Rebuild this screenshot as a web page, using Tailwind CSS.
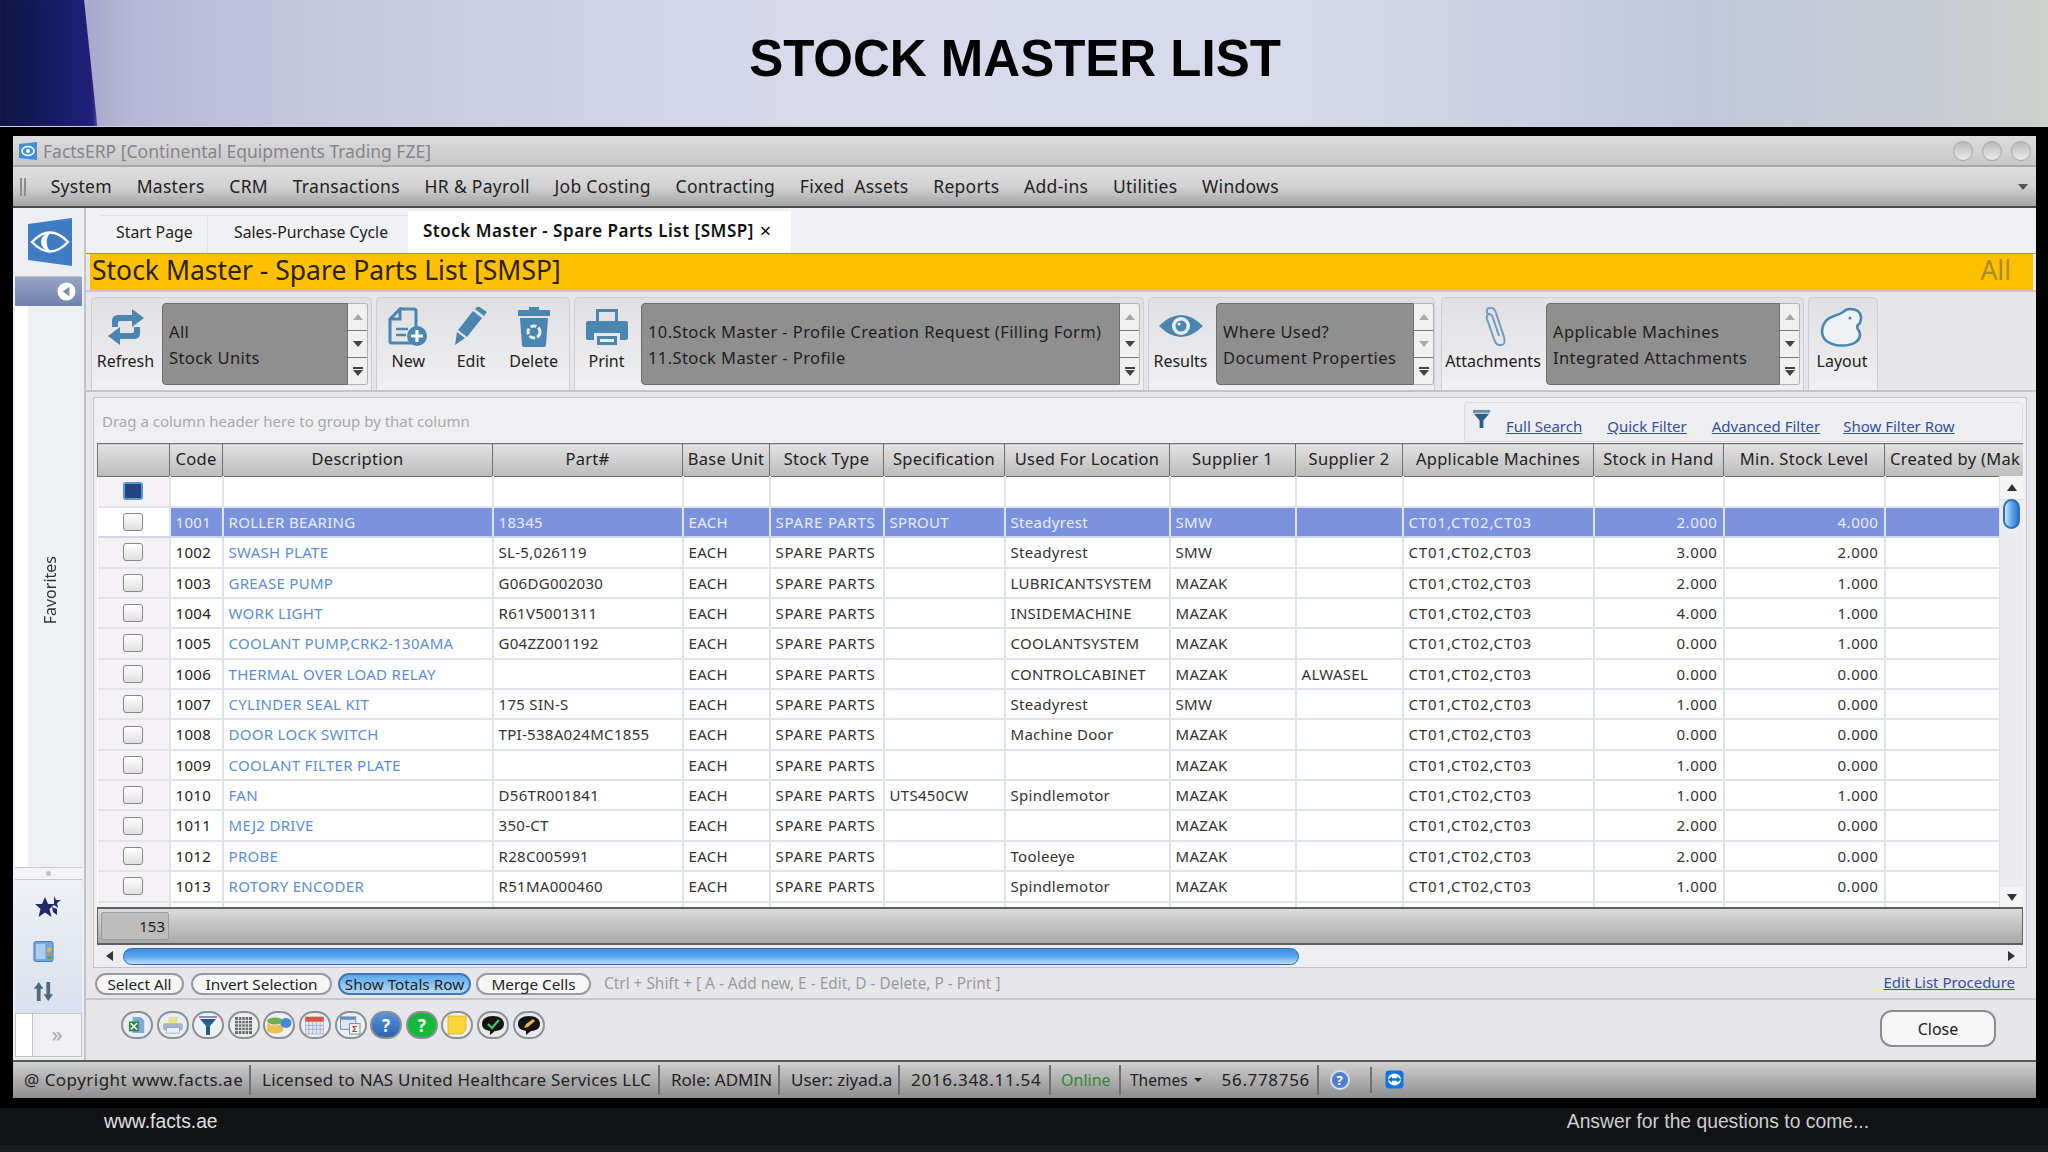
<!DOCTYPE html>
<html lang="en">
<head>
  <meta charset="UTF-8">
  <title>Stock Master List</title>
  <script src="https://cdn.jsdelivr.net/npm/@tailwindcss/browser@4"></script>
</head>
<body class="w-[2048px] h-[1152px] overflow-hidden bg-black flex flex-col font-['Noto_Sans',sans-serif] text-[#222]">

  <!-- Banner -->
  <header class="relative h-[127px] shrink-0 overflow-hidden flex items-center justify-center pb-[10px] bg-[linear-gradient(90deg,#a9a9cc_90px,#b8b9d6_140px,#c4c6e0_300px,#d8daec_800px,#d6daea_1300px,#c0c8da_1700px,#c6cbd4_1900px,#cdd0cc_2048px)] border-b border-[#d0d0d8]">
    <div class="absolute left-[-6px] top-[-6px] bottom-[-6px] w-[104px] blur-[3px] bg-gradient-to-r from-[#0c1440] to-[#20207e] [clip-path:polygon(0_0,86%_0,100%_100%,0_100%)]"></div>
    <h1 class="relative ml-[-18px] font-['Liberation_Sans',sans-serif] font-bold text-[51px] leading-none text-black">STOCK MASTER LIST</h1>
  </header>

  <!-- App window -->
  <div class="pt-[9px] pl-[13px] pr-[12px] h-[971px] shrink-0">
    <div class="h-[962px] flex flex-col bg-[#e7e7e9]">

      <!-- Title bar -->
      <div class="h-[31px] shrink-0 flex items-center pl-[5px] pr-[5px] bg-gradient-to-b from-[#dcdcdc] to-[#c8c8c8] border-b-2 border-[#a8a8a8]">
        <svg viewBox="0 0 20 20" class="w-[20px] h-[20px]"><path d="M1 3 L19 1 V19 L1 17 Z" fill="#3f8fd8"/><ellipse cx="10" cy="10" rx="6" ry="4.5" fill="none" stroke="#fff" stroke-width="1.6"/><circle cx="10" cy="10" r="2" fill="#fff"/></svg>
        <span class="ml-[5px] pt-[2px] text-[17.5px] text-[#85858a]">FactsERP [Continental Equipments Trading FZE]</span>
        <div class="ml-auto flex gap-[9px]">
          <span class="w-[20px] h-[20px] rounded-full border border-[#a8a8a8] bg-gradient-to-b from-[#b8b8b8] to-[#ececec]"></span>
          <span class="w-[20px] h-[20px] rounded-full border border-[#a8a8a8] bg-gradient-to-b from-[#b8b8b8] to-[#ececec]"></span>
          <span class="w-[20px] h-[20px] rounded-full border border-[#a8a8a8] bg-gradient-to-b from-[#b8b8b8] to-[#ececec]"></span>
        </div>
      </div>

      <!-- Menu bar -->
      <nav class="h-[41px] shrink-0 flex items-center gap-[24.7px] pl-[7px] pr-[8px] text-[17.5px] tracking-[0.3px] text-[#222] bg-gradient-to-b from-[#dedede] via-[#d2d2d2] to-[#a4a4a4] border-b-2 border-[#4c4c4c]">
        <span class="w-[6px] h-[18px] border-x-2 border-[#8c8c8c]"></span>
        <span>System</span><span>Masters</span><span>CRM</span><span>Transactions</span><span>HR &amp; Payroll</span><span>Job Costing</span><span>Contracting</span><span>Fixed&nbsp; Assets</span><span>Reports</span><span>Add-ins</span><span>Utilities</span><span>Windows</span>
        <span class="ml-auto w-0 h-0 border-x-[5px] border-x-transparent border-t-[6px] border-t-[#555]"></span>
      </nav>

      <div class="h-[852px] shrink-0 flex">

        <!-- Side rail -->
        <aside class="w-[73px] shrink-0 flex flex-col border-r-2 border-[#c4c4c4] bg-[#eceef2] px-[2px]">
          <div class="h-[69px] shrink-0 flex items-center justify-center pl-[2px] border-b border-[#c8c8c8]">
            <svg viewBox="0 0 44 48" class="w-[44px] h-[48px]"><path d="M0 6 L44 0 V48 L0 42 Z" fill="#3f7cc4"/><path d="M4 24 Q22 5 40 24 Q22 43 4 24Z" fill="none" stroke="#fff" stroke-width="2.4"/><path d="M22 15 A9 9 0 0 0 22 33 A14 14 0 0 1 22 15Z" fill="#fff"/></svg>
          </div>
          <div class="h-[29px] shrink-0 flex items-center justify-end pr-[6px] bg-gradient-to-b from-[#97a5c6] to-[#6f83ad]">
            <svg viewBox="0 0 20 20" class="w-[19px] h-[19px]"><circle cx="10" cy="10" r="9.5" fill="#fff"/><path d="M13 5 L6 10 L13 15 Z" fill="#7b8dae"/></svg>
          </div>
          <div class="flex-1 flex items-center justify-center pl-[3px] pt-[8px] bg-gradient-to-r from-white from-20% to-[#eff0f3] to-20%">
            <span class="[writing-mode:vertical-rl] rotate-180 text-[16px] text-[#333]">Favorites</span>
          </div>
          <div class="h-[13px] shrink-0 flex items-center justify-center bg-[#f4f4f6] border-y border-[#c8c8c8]"><span class="w-[5px] h-[5px] rounded-full bg-[#c4c4c4]"></span></div>
          <div class="h-[133px] shrink-0 flex flex-col items-center pt-[15px] bg-gradient-to-b from-[#eef0f4] to-[#d9e1ee]">
            <svg viewBox="0 0 28 24" class="w-[28px] h-[24px]"><path d="M10 2 L13 9 L20 9 L14.5 14 L16.5 22 L10 17.5 L3.5 22 L5.5 14 L0 9 L7 9Z" fill="#1f2a6c"/><path d="M19 1 L21 5 L26 5 L22 8 L23 13 L19 10 Z M17 12 L22 14 L22 20 L18 17Z" fill="#1f2a6c"/></svg>
            <svg viewBox="0 0 22 22" class="w-[21px] h-[21px] mt-[22px] mr-[10px]"><rect x="1" y="0.5" width="20" height="21" rx="2" fill="#6fa4dc" stroke="#4a78b0"/><rect x="3" y="3" width="10" height="16" fill="#a8cdf0"/><rect x="15" y="7" width="4" height="4" fill="#e0c030"/><rect x="15" y="12" width="4" height="3" fill="#d89030"/><rect x="15" y="16" width="4" height="3" fill="#60a040"/></svg>
            <svg viewBox="0 0 22 22" class="w-[21px] h-[21px] mt-[19px] mr-[10px]"><path d="M6 1 L11 8 H8 V21 H4 V8 H1 Z M16 21 L11 14 H14 V1 H18 V14 H21 Z" fill="#4b6b82"/></svg>
          </div>
          <div class="h-[44px] shrink-0 flex bg-[#f0f0f2] border border-[#c4c4c4] mb-[3px]">
            <span class="w-[17px] border-r border-[#c4c4c4] bg-white"></span>
            <span class="flex-1 flex items-center justify-center text-[22px] leading-none text-[#a4a8b0] pb-[4px]">»</span>
          </div>
        </aside>

        <!-- Main -->
        <main class="flex-1 min-w-0 flex flex-col">

          <!-- Tabs -->
          <div class="h-[45px] shrink-0 flex items-end pl-[14px] bg-[#f0f0f3] text-[15.8px]">
            <div class="w-[108px] h-[38px] flex items-center pl-[16px] pb-[4px] border-r border-[#e2e2e6] border-t border-t-[#e2e2e6]">Start Page</div>
            <div class="w-[200px] h-[38px] flex items-center pl-[26px] pb-[4px] border-t border-t-[#e2e2e6]">Sales-Purchase Cycle</div>
            <div class="w-[383px] h-[42px] flex items-center pl-[15px] pb-[2px] bg-white font-semibold text-[17px] tracking-[0.52px] text-[#111] whitespace-nowrap">Stock Master - Spare Parts List [SMSP]<span class="ml-[6px] text-[20px] leading-none font-normal">×</span></div>
          </div>
          <div class="h-[1px] shrink-0 bg-[#8e8e8e]"></div>

          <!-- Heading band -->
          <div class="h-[36px] shrink-0 ml-[4px] mr-[3px] flex items-center justify-between pl-[2px] pr-[22px] pb-[4px] bg-[#ffc000] text-[26.5px] leading-none text-[#2a2200]">
            <span>Stock Master - Spare Parts List [SMSP]</span>
            <span class="text-[#a78d2c]">All</span>
          </div>
          <div class="h-[2px] shrink-0 bg-[#c8c8c8]"></div>

          <!-- Toolbar -->
          <div class="h-[100px] shrink-0 flex pl-[5px] pt-[5px] pr-[2px] bg-[#e7e7e9] border-b-2 border-[#c4c4c6] text-[16px]">

            <div class="w-[281px] flex rounded-t-[5px] border border-b-0 border-[#cfcfd2] bg-gradient-to-b from-[#e0e0e2] to-[#f0f0f2]">
              <div class="w-[70px] flex flex-col items-center pt-[9px] pr-[3px]">
                <svg viewBox="0 0 40 40" class="w-[40px] h-[40px]"><path d="M6 20 V14 Q6 8 12 8 H26 V2 L38 11 L26 20 V14 H14 Q12 14 12 16 V20 Z M34 20 V26 Q34 32 28 32 H14 V38 L2 29 L14 20 V26 H26 Q28 26 28 24 V20 Z" fill="#4a86b0"/></svg>
                <span class="mt-[2px]">Refresh</span>
              </div>
              <div class="w-[186px] h-[82px] mt-[5px] pt-[1px] flex flex-col justify-center leading-[26px] pl-[6px] bg-[#8f8f8f] border border-[#6e6e6e] rounded-l-[4px] text-[16.5px] tracking-[0.41px] text-[#1e1e1e]"><span>All</span><span>Stock Units</span></div>
              <div class="w-[20px] h-[82px] mt-[5px] flex flex-col border border-l-0 border-[#b4b4b4] rounded-r-[3px] bg-[#f0f0f0]">
                <span class="flex-1 flex items-center justify-center border-b border-[#777]"><span class="w-0 h-0 border-x-[5px] border-x-transparent border-b-[6px] border-b-[#aaa]"></span></span>
                <span class="flex-1 flex items-center justify-center border-b border-[#777]"><span class="w-0 h-0 border-x-[5px] border-x-transparent border-t-[6px] border-t-[#444]"></span></span>
                <span class="flex-1 flex flex-col gap-[1px] items-center justify-center"><span class="w-[10px] h-[2px] bg-[#444]"></span><span class="w-0 h-0 border-x-[5px] border-x-transparent border-t-[6px] border-t-[#444]"></span></span>
              </div>
            </div>

            <div class="w-[194px] ml-[4px] flex pr-[4px] rounded-t-[5px] border border-b-0 border-[#cfcfd2] bg-gradient-to-b from-[#e0e0e2] to-[#f0f0f2]">
              <div class="flex-1 flex flex-col items-center pt-[9px]">
                <svg viewBox="0 0 40 40" class="w-[40px] h-[40px]"><path d="M12 2 H26 Q28 2 28 4 V20 M24 36 H4 Q2 36 2 34 V12 L12 2 V12 H2" fill="none" stroke="#4a86b0" stroke-width="3"/><path d="M8 22 H20 M8 28 H18" stroke="#4a86b0" stroke-width="2.5"/><circle cx="29" cy="29" r="10" fill="#4a86b0"/><path d="M29 23 V35 M23 29 H35" stroke="#fff" stroke-width="3.2"/></svg>
                <span class="mt-[2px]">New</span>
              </div>
              <div class="flex-1 flex flex-col items-center pt-[9px]">
                <svg viewBox="0 0 36 40" class="w-[36px] h-[40px]"><path d="M2 38 L4 25 L12 31 Z M5 23 L20 4 L29 11 L14 30 Z M22 2 L25 -1 L34 5 L31 9 Z" fill="#4a86b0"/></svg>
                <span class="mt-[2px]">Edit</span>
              </div>
              <div class="flex-1 flex flex-col items-center pt-[9px]">
                <svg viewBox="0 0 36 40" class="w-[36px] h-[40px]"><path d="M13 0 H23 V3 H34 V9 H2 V3 H13 Z" fill="#4a86b0"/><path d="M4 11 H32 L30 38 Q30 40 28 40 H8 Q6 40 6 38 Z" fill="#4a86b0"/><circle cx="18" cy="25" r="6" fill="none" stroke="#e6eef4" stroke-width="3" stroke-dasharray="6 2"/></svg>
                <span class="mt-[2px]">Delete</span>
              </div>
            </div>

            <div class="w-[570px] ml-[4px] flex rounded-t-[5px] border border-b-0 border-[#cfcfd2] bg-gradient-to-b from-[#e0e0e2] to-[#f0f0f2]">
              <div class="w-[66px] flex flex-col items-center pt-[9px] pr-[3px]">
                <svg viewBox="0 0 44 40" class="w-[44px] h-[40px]"><path d="M11 2 H33 V14 H30 V5 H14 V14 H11 Z" fill="#4a86b0"/><path d="M3 14 H41 Q43 14 43 16 V31 Q43 33 41 33 H35 V26 H9 V33 H3 Q1 33 1 31 V16 Q1 14 3 14Z" fill="#4a86b0"/><path d="M12 29 H32 V38 H12 Z" fill="#4a86b0"/><path d="M15 32 H29 V35 H15 Z" fill="#e8eef2"/></svg>
                <span class="mt-[2px]">Print</span>
              </div>
              <div class="w-[479px] h-[82px] mt-[5px] pt-[1px] flex flex-col justify-center leading-[26px] pl-[6px] bg-[#8f8f8f] border border-[#6e6e6e] rounded-l-[4px] text-[16.5px] tracking-[0.41px] text-[#1e1e1e] whitespace-nowrap"><span>10.Stock Master - Profile Creation Request (Filling Form)</span><span>11.Stock Master - Profile</span></div>
              <div class="w-[20px] h-[82px] mt-[5px] flex flex-col border border-l-0 border-[#b4b4b4] rounded-r-[3px] bg-[#f0f0f0]">
                <span class="flex-1 flex items-center justify-center border-b border-[#777]"><span class="w-0 h-0 border-x-[5px] border-x-transparent border-b-[6px] border-b-[#aaa]"></span></span>
                <span class="flex-1 flex items-center justify-center border-b border-[#777]"><span class="w-0 h-0 border-x-[5px] border-x-transparent border-t-[6px] border-t-[#444]"></span></span>
                <span class="flex-1 flex flex-col gap-[1px] items-center justify-center"><span class="w-[10px] h-[2px] bg-[#444]"></span><span class="w-0 h-0 border-x-[5px] border-x-transparent border-t-[6px] border-t-[#444]"></span></span>
              </div>
            </div>

            <div class="w-[287px] ml-[4px] flex rounded-t-[5px] border border-b-0 border-[#cfcfd2] bg-gradient-to-b from-[#e0e0e2] to-[#f0f0f2]">
              <div class="w-[67px] flex flex-col items-center pt-[9px] pr-[4px]">
                <svg viewBox="0 0 44 40" class="w-[44px] h-[40px]"><path d="M0 20 Q22 -2 44 20 Q22 42 0 20Z" fill="#4a86b0" transform="translate(0 -1) "/><circle cx="22" cy="19" r="9" fill="#e8eef2"/><circle cx="22" cy="19" r="5.5" fill="#4a86b0"/><circle cx="20" cy="17" r="1.6" fill="#e8eef2"/></svg>
                <span class="mt-[2px]">Results</span>
              </div>
              <div class="w-[198px] h-[82px] mt-[5px] pt-[1px] flex flex-col justify-center leading-[26px] pl-[6px] bg-[#8f8f8f] border border-[#6e6e6e] rounded-l-[4px] text-[16.5px] tracking-[0.41px] text-[#1e1e1e] whitespace-nowrap"><span>Where Used?</span><span>Document Properties</span></div>
              <div class="w-[20px] h-[82px] mt-[5px] flex flex-col border border-l-0 border-[#b4b4b4] rounded-r-[3px] bg-[#f0f0f0]">
                <span class="flex-1 flex items-center justify-center border-b border-[#777]"><span class="w-0 h-0 border-x-[5px] border-x-transparent border-b-[6px] border-b-[#aaa]"></span></span>
                <span class="flex-1 flex items-center justify-center border-b border-[#777]"><span class="w-0 h-0 border-x-[5px] border-x-transparent border-t-[6px] border-t-[#aaa]"></span></span>
                <span class="flex-1 flex flex-col gap-[1px] items-center justify-center"><span class="w-[10px] h-[2px] bg-[#444]"></span><span class="w-0 h-0 border-x-[5px] border-x-transparent border-t-[6px] border-t-[#444]"></span></span>
              </div>
            </div>

            <div class="w-[363px] ml-[6px] flex rounded-t-[5px] border border-b-0 border-[#cfcfd2] bg-gradient-to-b from-[#e0e0e2] to-[#f0f0f2]">
              <div class="w-[104px] flex flex-col items-center pt-[9px] pr-[2px]">
                <svg viewBox="0 0 28 40" class="w-[28px] h-[40px]"><path d="M9 8 Q6 1 11 1 Q15 0 17 6 L25 30 Q27 38 22 38 Q17 39 15 32 L8 12 Q7 8 10 7 Q13 7 14 11 L20 29" fill="none" stroke="#6f9cc0" stroke-width="2"/></svg>
                <span class="mt-[2px]">Attachments</span>
              </div>
              <div class="w-[234px] h-[82px] mt-[5px] pt-[1px] flex flex-col justify-center leading-[26px] pl-[6px] bg-[#8f8f8f] border border-[#6e6e6e] rounded-l-[4px] text-[16.5px] tracking-[0.41px] text-[#1e1e1e] whitespace-nowrap"><span>Applicable Machines</span><span>Integrated Attachments</span></div>
              <div class="w-[20px] h-[82px] mt-[5px] flex flex-col border border-l-0 border-[#b4b4b4] rounded-r-[3px] bg-[#f0f0f0]">
                <span class="flex-1 flex items-center justify-center border-b border-[#777]"><span class="w-0 h-0 border-x-[5px] border-x-transparent border-b-[6px] border-b-[#aaa]"></span></span>
                <span class="flex-1 flex items-center justify-center border-b border-[#777]"><span class="w-0 h-0 border-x-[5px] border-x-transparent border-t-[6px] border-t-[#444]"></span></span>
                <span class="flex-1 flex flex-col gap-[1px] items-center justify-center"><span class="w-[10px] h-[2px] bg-[#444]"></span><span class="w-0 h-0 border-x-[5px] border-x-transparent border-t-[6px] border-t-[#444]"></span></span>
              </div>
            </div>

            <div class="w-[70px] ml-[4px] flex flex-col items-center pt-[9px] pr-[2px] rounded-t-[5px] border border-b-0 border-[#cfcfd2] bg-gradient-to-b from-[#e0e0e2] to-[#f0f0f2]">
              <svg viewBox="0 0 44 40" class="w-[44px] h-[40px]"><path d="M30 2 Q40 2 41 10 Q41 16 38 18 Q36 20 39 24 Q42 30 36 35 Q28 40 16 38 Q2 35 2 24 Q3 12 14 9 Q20 7 23 5 Q26 2 30 2Z" fill="#eef1f4" stroke="#4a86b0" stroke-width="2.6"/><circle cx="30" cy="11" r="1.6" fill="#4a86b0"/></svg>
              <span class="mt-[2px]">Layout</span>
            </div>
          </div>
          <div class="h-[5px] shrink-0 bg-[#e7e7e9]"></div>

          <!-- Grid frame -->
          <div class="h-[571px] shrink-0 ml-[7px] mr-[9px] flex flex-col border border-[#c4c4c6] bg-[#f0f0f2] pl-[3px] pr-[3px]">

            <!-- Group panel -->
            <div class="h-[45px] shrink-0 flex items-center pl-[5px] text-[15px] text-[#a8a8ac]">
              <span class="pt-[1px]">Drag a column header here to group by that column</span>
              <div class="ml-auto w-[559px] h-[40px] mt-[2px] flex items-center pl-[7px] gap-[25px] rounded-[4px] border border-[#dcdce0] bg-[#eeeef0] text-[15px] text-[#34509c] underline">
                <svg viewBox="0 0 20 20" class="w-[19px] h-[19px] mb-[6px] mr-[-12px]"><path d="M1 1 H19 V4 H1 Z" fill="#6a8fa8"/><path d="M2 5 H18 L12 12 V20 H8 V12 Z" fill="#2a5f86"/></svg>
                <span class="pt-[10px] ml-[2px]">Full Search</span><span class="pt-[10px]">Quick Filter</span><span class="pt-[10px]">Advanced Filter</span><span class="pt-[10px] ml-[-2px]">Show Filter Row</span>
              </div>
            </div>

            <!-- Data grid -->
            <div class="relative h-[464px] shrink-0 overflow-hidden bg-white">
              <table class="table-fixed border-collapse w-[1927px] whitespace-nowrap [&_th]:h-[33px] [&_th]:p-0 [&_th]:pb-[2px] [&_th]:font-normal [&_th]:text-[16.5px] [&_th]:tracking-[0.3px] [&_th]:text-center [&_th]:border [&_th]:border-[#6f6f6f] [&_th]:bg-gradient-to-b [&_th]:from-[#e2e2e2] [&_th]:to-[#bcbcbc] [&_th]:overflow-hidden [&_td]:h-[30.37px] [&_td]:px-[5px] [&_td]:py-0 [&_td]:text-[15px] [&_td]:tracking-[0.3px] [&_td]:text-[#333] [&_td]:overflow-hidden [&_td]:border-r-2 [&_td]:border-b-2 [&_td]:border-[#e2e2ea] [&_td:nth-child(1)]:p-0 [&_td:nth-child(1)]:bg-[#f4f2f4] [&_td:nth-child(2)]:text-[#222] [&_td:nth-child(3)]:text-[#5b8ed8] [&_td:nth-child(6)]:tracking-[0.78px] [&_td:nth-child(11)]:tracking-[0.86px] [&_td:nth-child(12)]:text-right [&_td:nth-child(13)]:text-right [&_td:nth-child(12)]:tracking-[0.54px] [&_td:nth-child(13)]:tracking-[0.54px]">
                <colgroup>
                  <col class="w-[72px]"><col class="w-[53px]"><col class="w-[270px]"><col class="w-[190px]"><col class="w-[87px]"><col class="w-[114px]"><col class="w-[121px]"><col class="w-[165px]"><col class="w-[126px]"><col class="w-[107px]"><col class="w-[191px]"><col class="w-[130px]"><col class="w-[161px]"><col class="w-[140px]">
                </colgroup>
                <thead>
                  <tr><th></th><th>Code</th><th>Description</th><th>Part#</th><th>Base Unit</th><th>Stock Type</th><th>Specification</th><th>Used For Location</th><th>Supplier 1</th><th>Supplier 2</th><th>Applicable Machines</th><th>Stock in Hand</th><th>Min. Stock Level</th><th class="text-left! pl-[5px]!">Created by (Mak</th></tr>
                </thead>
                <tbody>
                  <tr><td><span class="block mx-auto w-[20px] h-[18px] rounded-[3px] border-2 border-[#5b95e0] bg-[#23457f]"></span></td><td></td><td></td><td></td><td></td><td></td><td></td><td></td><td></td><td></td><td></td><td></td><td></td><td></td></tr>
                  <tr class="[&_td]:text-[#e8ecfa]! [&_td]:bg-[#7b93dc] [&_td]:border-b-[#d0d4ec] [&_td:first-child]:bg-white!"><td><span class="block mx-auto w-[20px] h-[18px] rounded-[3px] border border-[#888] bg-gradient-to-b from-white to-[#e0e0e0]"></span></td><td>1001</td><td>ROLLER BEARING</td><td>18345</td><td>EACH</td><td>SPARE PARTS</td><td>SPROUT</td><td>Steadyrest</td><td>SMW</td><td></td><td>CT01,CT02,CT03</td><td>2.000</td><td>4.000</td><td></td></tr>
                  <tr><td><span class="block mx-auto w-[20px] h-[18px] rounded-[3px] border border-[#888] bg-gradient-to-b from-white to-[#e0e0e0]"></span></td><td>1002</td><td>SWASH PLATE</td><td>SL-5,026119</td><td>EACH</td><td>SPARE PARTS</td><td></td><td>Steadyrest</td><td>SMW</td><td></td><td>CT01,CT02,CT03</td><td>3.000</td><td>2.000</td><td></td></tr>
                  <tr><td><span class="block mx-auto w-[20px] h-[18px] rounded-[3px] border border-[#888] bg-gradient-to-b from-white to-[#e0e0e0]"></span></td><td>1003</td><td>GREASE PUMP</td><td>G06DG002030</td><td>EACH</td><td>SPARE PARTS</td><td></td><td>LUBRICANTSYSTEM</td><td>MAZAK</td><td></td><td>CT01,CT02,CT03</td><td>2.000</td><td>1.000</td><td></td></tr>
                  <tr><td><span class="block mx-auto w-[20px] h-[18px] rounded-[3px] border border-[#888] bg-gradient-to-b from-white to-[#e0e0e0]"></span></td><td>1004</td><td>WORK LIGHT</td><td>R61V5001311</td><td>EACH</td><td>SPARE PARTS</td><td></td><td>INSIDEMACHINE</td><td>MAZAK</td><td></td><td>CT01,CT02,CT03</td><td>4.000</td><td>1.000</td><td></td></tr>
                  <tr><td><span class="block mx-auto w-[20px] h-[18px] rounded-[3px] border border-[#888] bg-gradient-to-b from-white to-[#e0e0e0]"></span></td><td>1005</td><td>COOLANT PUMP,CRK2-130AMA</td><td>G04ZZ001192</td><td>EACH</td><td>SPARE PARTS</td><td></td><td>COOLANTSYSTEM</td><td>MAZAK</td><td></td><td>CT01,CT02,CT03</td><td>0.000</td><td>1.000</td><td></td></tr>
                  <tr><td><span class="block mx-auto w-[20px] h-[18px] rounded-[3px] border border-[#888] bg-gradient-to-b from-white to-[#e0e0e0]"></span></td><td>1006</td><td>THERMAL OVER LOAD RELAY</td><td></td><td>EACH</td><td>SPARE PARTS</td><td></td><td>CONTROLCABINET</td><td>MAZAK</td><td>ALWASEL</td><td>CT01,CT02,CT03</td><td>0.000</td><td>0.000</td><td></td></tr>
                  <tr><td><span class="block mx-auto w-[20px] h-[18px] rounded-[3px] border border-[#888] bg-gradient-to-b from-white to-[#e0e0e0]"></span></td><td>1007</td><td>CYLINDER SEAL KIT</td><td>175 SIN-S</td><td>EACH</td><td>SPARE PARTS</td><td></td><td>Steadyrest</td><td>SMW</td><td></td><td>CT01,CT02,CT03</td><td>1.000</td><td>0.000</td><td></td></tr>
                  <tr><td><span class="block mx-auto w-[20px] h-[18px] rounded-[3px] border border-[#888] bg-gradient-to-b from-white to-[#e0e0e0]"></span></td><td>1008</td><td>DOOR LOCK SWITCH</td><td>TPI-538A024MC1855</td><td>EACH</td><td>SPARE PARTS</td><td></td><td>Machine Door</td><td>MAZAK</td><td></td><td>CT01,CT02,CT03</td><td>0.000</td><td>0.000</td><td></td></tr>
                  <tr><td><span class="block mx-auto w-[20px] h-[18px] rounded-[3px] border border-[#888] bg-gradient-to-b from-white to-[#e0e0e0]"></span></td><td>1009</td><td>COOLANT FILTER PLATE</td><td></td><td>EACH</td><td>SPARE PARTS</td><td></td><td></td><td>MAZAK</td><td></td><td>CT01,CT02,CT03</td><td>1.000</td><td>0.000</td><td></td></tr>
                  <tr><td><span class="block mx-auto w-[20px] h-[18px] rounded-[3px] border border-[#888] bg-gradient-to-b from-white to-[#e0e0e0]"></span></td><td>1010</td><td>FAN</td><td>D56TR001841</td><td>EACH</td><td>SPARE PARTS</td><td>UTS450CW</td><td>Spindlemotor</td><td>MAZAK</td><td></td><td>CT01,CT02,CT03</td><td>1.000</td><td>1.000</td><td></td></tr>
                  <tr><td><span class="block mx-auto w-[20px] h-[18px] rounded-[3px] border border-[#888] bg-gradient-to-b from-white to-[#e0e0e0]"></span></td><td>1011</td><td>MEJ2 DRIVE</td><td>350-CT</td><td>EACH</td><td>SPARE PARTS</td><td></td><td></td><td>MAZAK</td><td></td><td>CT01,CT02,CT03</td><td>2.000</td><td>0.000</td><td></td></tr>
                  <tr><td><span class="block mx-auto w-[20px] h-[18px] rounded-[3px] border border-[#888] bg-gradient-to-b from-white to-[#e0e0e0]"></span></td><td>1012</td><td>PROBE</td><td>R28C005991</td><td>EACH</td><td>SPARE PARTS</td><td></td><td>Tooleeye</td><td>MAZAK</td><td></td><td>CT01,CT02,CT03</td><td>2.000</td><td>0.000</td><td></td></tr>
                  <tr><td><span class="block mx-auto w-[20px] h-[18px] rounded-[3px] border border-[#888] bg-gradient-to-b from-white to-[#e0e0e0]"></span></td><td>1013</td><td>ROTORY ENCODER</td><td>R51MA000460</td><td>EACH</td><td>SPARE PARTS</td><td></td><td>Spindlemotor</td><td>MAZAK</td><td></td><td>CT01,CT02,CT03</td><td>1.000</td><td>0.000</td><td></td></tr>
                  <tr><td></td><td></td><td></td><td></td><td></td><td></td><td></td><td></td><td></td><td></td><td></td><td></td><td></td><td></td></tr>
                </tbody>
              </table>
              <!-- vertical scrollbar sits over the last column -->
              <div class="absolute right-0 top-[33px] bottom-0 w-[24px] flex flex-col items-center bg-[#ececee] border-l border-[#e0e0e4]">
                <span class="h-[24px] w-full flex items-center justify-center border-b border-[#ddd] bg-[#f4f4f4]"><span class="w-0 h-0 border-x-[5px] border-x-transparent border-b-[7px] border-b-[#333]"></span></span>
                <span class="mt-[-1px] w-[17px] h-[30px] rounded-full border-2 border-[#2f6fb8] bg-gradient-to-r from-[#cfe6fb] via-[#5fa8ec] to-[#2a7ad0]"></span>
                <span class="mt-auto h-[20px] w-full flex items-center justify-center bg-[#f4f4f4]"><span class="w-0 h-0 border-x-[5px] border-x-transparent border-t-[7px] border-t-[#333]"></span></span>
              </div>
            </div>

            <!-- Totals row -->
            <div class="h-[38px] shrink-0 flex items-center pl-[3px] bg-gradient-to-b from-[#dcdcdc] to-[#a8a8a8] border-y-2 border-x border-[#606060]">
              <span class="w-[68px] h-[28px] flex items-center justify-end pr-[3px] rounded-[2px] border border-[#9c9c9c] bg-[#bdbdbd] text-[15px]">153</span>
            </div>

            <!-- Horizontal scrollbar -->
            <div class="h-[22px] shrink-0 flex items-center bg-[#eeeef0]">
              <span class="w-[24px] flex justify-center"><span class="w-0 h-0 border-y-[5px] border-y-transparent border-r-[7px] border-r-[#333]"></span></span>
              <span class="w-[1176px] h-[17px] ml-[2px] rounded-full border border-[#2a6cb0] bg-gradient-to-b from-[#3d8ae0] via-[#5aa6ee] to-[#bfe0f8]"></span>
              <span class="ml-auto w-[24px] flex justify-center"><span class="w-0 h-0 border-y-[5px] border-y-transparent border-l-[7px] border-l-[#333]"></span></span>
            </div>
          </div>

          <!-- Selection buttons -->
          <div class="h-[32px] shrink-0 flex items-center pl-[9px] pr-[21px] pt-[2px] text-[15.3px] border-b-2 border-[#c6c6c8] whitespace-nowrap">
            <span class="w-[89px] h-[22px] flex items-center justify-center rounded-full border-2 border-[#9a9a9c] bg-[#f6f6f6]">Select All</span>
            <span class="w-[141px] h-[22px] ml-[7px] flex items-center justify-center rounded-full border-2 border-[#9a9a9c] bg-[#f6f6f6]">Invert Selection</span>
            <span class="w-[133px] h-[22px] ml-[6px] flex items-center justify-center rounded-full border-2 border-[#3f78b4] bg-gradient-to-b from-[#58a8ec] to-[#b4daf6]">Show Totals Row</span>
            <span class="w-[115px] h-[22px] ml-[5px] flex items-center justify-center rounded-full border-2 border-[#9a9a9c] bg-[#f6f6f6]">Merge Cells</span>
            <span class="ml-[13px] text-[15.4px] text-[#9a9a9e]">Ctrl + Shift + [ A - Add new, E - Edit, D - Delete, P - Print ]</span>
            <span class="ml-auto mb-[4px] text-[15px] text-[#34509c] underline">Edit List Procedure</span>
          </div>

          <!-- Icon tray and close -->
          <div class="flex-1 flex items-start pl-[35px] pr-[40px] pt-[10px]">
            <div class="flex gap-[3.6px] mt-[1px]">
              <span class="w-[32px] h-[28px] flex items-center justify-center rounded-full border-2 border-[#8c9096] bg-[#e8eef4]"><svg viewBox="0 0 20 20" class="w-[18px] h-[18px]"><path d="M5 1 H14 L18 5 V19 H5 Z" fill="#7fa8dc"/><rect x="1" y="6" width="11" height="11" fill="#2f8a3c"/><path d="M3 8 L10 15 M10 8 L3 15" stroke="#fff" stroke-width="1.6"/></svg></span>
              <span class="w-[32px] h-[28px] flex items-center justify-center rounded-full border-2 border-[#8c9096] bg-[#e8eef4]"><svg viewBox="0 0 24 20" class="w-[22px] h-[18px]"><path d="M7 1 H17 V9 H7 Z" fill="#e8e090"/><rect x="1" y="8" width="22" height="8" rx="2" fill="#a8b4cc"/><rect x="5" y="13" width="14" height="6" fill="#eef0f6" stroke="#8090a8" stroke-width=".6"/></svg></span>
              <span class="w-[32px] h-[28px] flex items-center justify-center rounded-full border-2 border-[#8c9096] bg-[#eef2f4]"><svg viewBox="0 0 20 20" class="w-[20px] h-[20px]"><path d="M1 1 H19 V3 H1 Z" fill="#6a98b8"/><path d="M2 4 H18 L12 11 V20 H8 V11 Z" fill="#1f5f88"/></svg></span>
              <span class="w-[32px] h-[28px] flex items-center justify-center rounded-full border-2 border-[#8c9096] bg-[#eeeeee]"><svg viewBox="0 0 18 18" class="w-[17px] h-[17px]"><rect width="18" height="18" fill="#666"/><path d="M3.6 0 V18 M7.2 0 V18 M10.8 0 V18 M14.4 0 V18 M0 3.6 H18 M0 7.2 H18 M0 10.8 H18 M0 14.4 H18" stroke="#eee" stroke-width="1"/></svg></span>
              <span class="w-[32px] h-[28px] flex items-center justify-center rounded-full border-2 border-[#8c9096] bg-[#eef0f2]"><svg viewBox="0 0 26 20" class="w-[26px] h-[20px]"><ellipse cx="9" cy="6" rx="8" ry="3.5" fill="#70b050"/><path d="M1 8 Q9 13 17 8 V16 Q9 21 1 16 Z" fill="#eec050"/><ellipse cx="20" cy="8" rx="5.5" ry="5" fill="#3f8ad8"/></svg></span>
              <span class="w-[32px] h-[28px] flex items-center justify-center rounded-full border-2 border-[#8c9096] bg-[#eeeef0]"><svg viewBox="0 0 20 20" class="w-[19px] h-[19px]"><rect x="0.5" y="1" width="19" height="18" fill="#dfe6f4" stroke="#b8a0a0" stroke-width=".7"/><rect x="0.5" y="1" width="19" height="5" fill="#e05040"/><path d="M4 6 V19 M8 6 V19 M12 6 V19 M16 6 V19 M1 10 H19 M1 14 H19" stroke="#98a8cc" stroke-width=".8"/></svg></span>
              <span class="w-[32px] h-[28px] flex items-center justify-center rounded-full border-2 border-[#8c9096] bg-[#eef0f4]"><svg viewBox="0 0 22 20" class="w-[21px] h-[19px]"><rect x="0.5" y="1" width="16" height="13" fill="#dce6f4" stroke="#6a8cb8"/><rect x="0.5" y="1" width="16" height="3" fill="#6a8cb8"/><rect x="10" y="8" width="11" height="11" fill="#f4f4f4" stroke="#808890"/><text x="15.5" y="17" font-size="9" font-weight="700" text-anchor="middle" fill="#b04020">Σ</text></svg></span>
              <span class="w-[32px] h-[28px] flex items-center justify-center rounded-full border-2 border-[#8c9096] bg-gradient-to-b from-[#5a92dc] to-[#2a62b0] text-white font-bold text-[17px] leading-none">?</span>
              <span class="w-[32px] h-[28px] flex items-center justify-center rounded-full border-2 border-[#8c9096] bg-[#14b83c] text-white font-bold text-[17px] leading-none">?</span>
              <span class="w-[32px] h-[28px] flex items-center justify-center rounded-full border-2 border-[#8c9096] bg-[#f0f0ec]"><svg viewBox="0 0 20 20" class="w-[20px] h-[20px]"><path d="M1 1 H19 V15 L15 19 H1 Z" fill="#f6d638" stroke="#d4b020" stroke-width=".7"/></svg></span>
              <span class="w-[32px] h-[28px] flex items-center justify-center rounded-full border-2 border-[#8c9096] bg-[#e8e8e8]"><svg viewBox="0 0 24 20" class="w-[24px] h-[20px]"><path d="M12 1 C19 1 23 4 23 9 C23 14 18 16 14 16 L9 20 L9 16 C4 15 1 13 1 9 C1 4 5 1 12 1Z" fill="#141414"/><path d="M7 9 L11 13 L18 5" stroke="#3cc060" stroke-width="2.4" fill="none"/></svg></span>
              <span class="w-[32px] h-[28px] flex items-center justify-center rounded-full border-2 border-[#8c9096] bg-[#e8e8e8]"><svg viewBox="0 0 24 20" class="w-[24px] h-[20px]"><path d="M12 1 C19 1 23 4 23 9 C23 14 18 16 14 16 L9 20 L9 16 C4 15 1 13 1 9 C1 4 5 1 12 1Z" fill="#141414"/><path d="M7 13 L9 9 L16 4 L18 6 L11 12 Z" fill="#e0b840"/></svg></span>
            </div>
            <span class="ml-auto w-[116px] h-[37px] flex items-center justify-center rounded-[12px] border-2 border-[#8c8c8c] bg-[#f6f6f6] text-[16px]">Close</span>
          </div>
        </main>
      </div>

      <!-- Status bar -->
      <footer class="h-[38px] shrink-0 flex items-center pl-[11px] text-[17px] text-[#222] bg-gradient-to-b from-[#d0d0d0] to-[#8e8e8e] border-t-2 border-[#585858] whitespace-nowrap">
        <span class="w-[227px] border-r-2 border-[#707070] leading-[30px] tracking-[0.47px]">@ Copyright www.facts.ae</span>
        <span class="w-[409px] pl-[11px] border-r-2 border-[#707070] leading-[30px] tracking-[0.22px]">Licensed to NAS United Healthcare Services LLC</span>
        <span class="w-[120px] pl-[11px] border-r-2 border-[#707070] leading-[30px]">Role: ADMIN</span>
        <span class="w-[120px] pl-[11px] border-r-2 border-[#707070] leading-[30px]">User: ziyad.a</span>
        <span class="w-[151px] pl-[11px] border-r-2 border-[#707070] leading-[30px] tracking-[0.7px]">2016.348.11.54</span>
        <span class="w-[70px] pl-[10px] border-r-2 border-[#707070] leading-[30px] text-[16px] text-[#2e8a2e]">Online</span>
        <span class="pl-[9px] leading-[30px] text-[15.5px]">Themes</span>
        <span class="ml-[6px] w-0 h-0 border-x-[4px] border-x-transparent border-t-[4px] border-t-[#222]"></span>
        <span class="w-[106px] ml-[11px] pl-[9px] border-r-2 border-[#707070] leading-[30px] tracking-[0.66px]">56.778756</span>
        <span class="ml-[11px] w-[20px] h-[20px] flex items-center justify-center rounded-full border-2 border-[#d8e0f0] bg-[#4f7fd0] text-white text-[13px] font-bold leading-none">?</span>
        <span class="ml-[20px] w-[2px] h-[26px] bg-[#707070]"></span>
        <svg viewBox="0 0 20 20" class="ml-[13px] w-[20px] h-[20px]"><rect x="0.5" y="0.5" width="18" height="18" rx="4" fill="#0e72e8"/><ellipse cx="9.5" cy="9.5" rx="6.5" ry="6" fill="#fff"/><path d="M3 9.5 L7 6.5 V8.3 H12 V6.5 L16 9.5 L12 12.5 V10.7 H7 V12.5 Z" fill="#0e72e8"/></svg>
      </footer>
    </div>
  </div>

  <!-- Caption strip -->
  <div class="h-[44px] shrink-0 mt-[10px] flex pl-[104px] pr-[179px] justify-between pt-[1px] bg-[#111214] border-b-[7px] border-[#1d1d1f] font-['Liberation_Sans',sans-serif] text-[19.3px] leading-[26px]">
    <span class="text-[#e0e0e0]">www.facts.ae</span>
    <span class="text-[#cfcfcf]">Answer for the questions to come...</span>
  </div>
</body>
</html>
